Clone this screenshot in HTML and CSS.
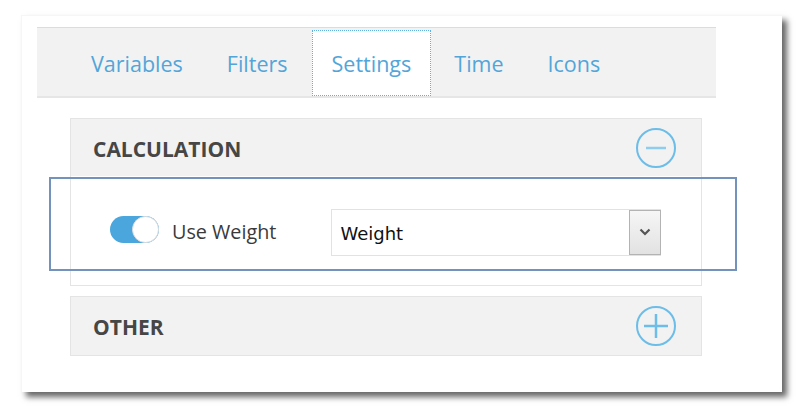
FILE: index.html
```html
<!DOCTYPE html>
<html lang="en">
<head>
  <meta charset="UTF-8" />
  <title>Settings</title>
  <link rel="stylesheet" href="styles.css">
</head>
<body>
  <div class="card">
    <!-- Tabs -->
    <div class="tabs">
      <a class="tab">Variables</a>
      <a class="tab">Filters</a>
      <a class="tab active">Settings</a>
      <a class="tab">Time</a>
      <a class="tab">Icons</a>
    </div>

    <!-- Calculation panel -->
    <div class="panel">
      <div class="panel-head">
        <span class="panel-title">CALCULATION</span>
        <svg class="round-btn" width="42" height="42" viewBox="0 0 42 42">
          <circle cx="21" cy="21" r="19" fill="none" stroke="#6cbde8" stroke-width="2"/>
          <line x1="11" y1="21" x2="31" y2="21" stroke="#8fcdee" stroke-width="2.5"/>
        </svg>
      </div>
      <div class="panel-body">
        <div class="switch"><span class="knob"></span></div>
        <span class="switch-label">Use Weight</span>
        <div class="select">
          <span class="select-value">Weight</span>
          <span class="select-btn">
            <svg width="12" height="8" viewBox="0 0 12 8"><path d="M1.5 1.5 L6 6 L10.5 1.5" fill="none" stroke="#555" stroke-width="2.2"/></svg>
          </span>
        </div>
      </div>
      <div class="highlight"></div>
    </div>

    <!-- Other panel -->
    <div class="panel">
      <div class="panel-head short">
        <span class="panel-title">OTHER</span>
        <svg class="round-btn" width="42" height="42" viewBox="0 0 42 42">
          <circle cx="21" cy="21" r="19" fill="none" stroke="#6cbde8" stroke-width="2"/>
          <line x1="9" y1="21" x2="33" y2="21" stroke="#6cbde8" stroke-width="2.5"/>
          <line x1="21" y1="9" x2="21" y2="33" stroke="#6cbde8" stroke-width="2.5"/>
        </svg>
      </div>
    </div>
  </div>
</body>
</html>
```

FILE: styles.css
```css
* {
  box-sizing: border-box;
}

html, body {
  min-height: 412px;
}

body {
  margin: 0;
  padding-bottom: 20px;
  background: #fff;
  font-family: "Open Sans", Arial, sans-serif;
}

.card {
  position: relative;
  margin: 15px 0 0 21px;
  width: 761px;
  height: 377px;
  background: #fff;
  border-top: 1px solid #f6f6f6;
  border-left: 1px solid #f6f6f6;
  box-shadow: 5px 5px 6px rgba(0, 0, 0, 0.6);
  padding: 11px 0 0 15px;
}

.tabs {
  display: flex;
  align-items: stretch;
  width: 679px;
  height: 71px;
  background: #f2f2f2;
  border-top: 1px solid #dcdcdc;
  border-bottom: 2px solid #e6e6e6;
  padding-left: 32px;
}

.tab {
  display: flex;
  align-items: center;
  padding: 0 21px;
  font-size: 21.5px;
  color: #52a5d9;
  border: 1px solid transparent;
  margin-top: 2px;
}

.tab.active {
  background: #fff;
  border: 1px dotted #5bb2e3;
  padding: 0 19px;
  margin: 2px 1px 0 2px;
}

.panel {
  position: relative;
  margin-left: 33px;
  width: 632px;
  border: 1px solid #e4e4e4;
  margin-top: 20px;
}

.panel + .panel {
  margin-top: 10px;
}

.panel-head {
  display: flex;
  align-items: center;
  justify-content: space-between;
  height: 57px;
  background: #f2f2f2;
  padding: 0 24px 0 22px;
}

.panel-head.short {
  height: 58px;
}

.panel-title {
  font-size: 21px;
  font-weight: bold;
  color: #464646;
  margin-top: 2px;
}

.panel-body {
  display: flex;
  align-items: center;
  height: 109px;
  padding: 0 0 2px 39px;
}

.switch {
  position: relative;
  width: 49px;
  height: 27px;
  border-radius: 14px;
  background: #4aa6dc;
}

.knob {
  position: absolute;
  right: 0;
  top: 0;
  width: 27px;
  height: 27px;
  border-radius: 50%;
  background: #fff;
  border: 1px solid #dedede;
}

.switch-label {
  margin: 3px 0 0 13px;
  font-size: 19.8px;
  color: #3a3a3a;
}

.select {
  display: flex;
  align-items: stretch;
  margin: 5px 0 0 55px;
  width: 330px;
  height: 47px;
  border: 1px solid #e2e2e2;
  background: #fff;
}

.select-value {
  flex: 1;
  display: flex;
  align-items: center;
  padding: 2px 0 0 8px;
  font-family: "DejaVu Sans", sans-serif;
  font-size: 18px;
  color: #111;
}

.select-btn {
  display: flex;
  align-items: center;
  justify-content: center;
  width: 32px;
  margin: 0 -1px 0 0;
  background: linear-gradient(#f6f6f6, #e2e2e2);
  border: 1px solid #b3b3b3;
}

.highlight {
  position: absolute;
  left: -22px;
  top: 58px;
  width: 688px;
  height: 94px;
  border: 2px solid #7393bd;
}
```
